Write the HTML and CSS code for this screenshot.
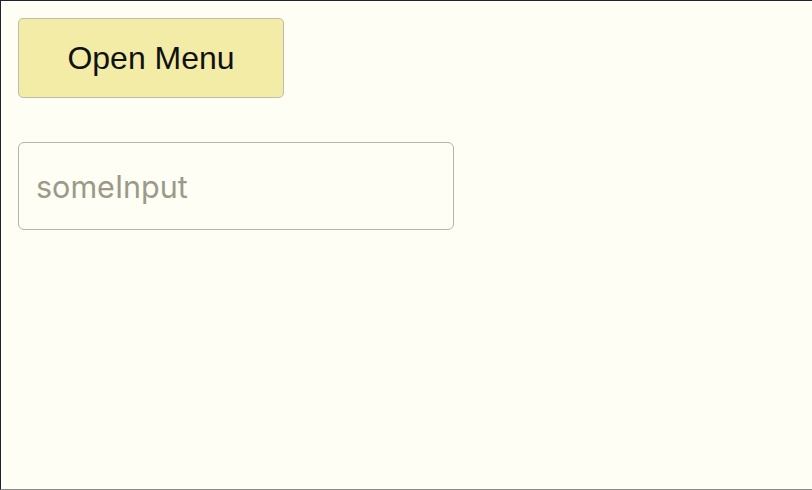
FILE: index.html
```html
<!DOCTYPE html>
<html lang="en">
<head>
<meta charset="utf-8">
<title>Menu</title>
<link rel="stylesheet" href="styles.css">
</head>
<body>
<div class="frame">
  <button class="menu-btn" type="button">Open Menu</button>
  <input class="some-input" type="text" placeholder="someInput">
</div>
</body>
</html>
```

FILE: styles.css
```css
html, body {
  margin: 0;
  padding: 0;
  height: 100%;
}
body {
  background: #fefef5;
  font-family: "Liberation Sans", Arial, sans-serif;
}
.frame {
  box-sizing: border-box;
  height: 490px;
  border-top: 1px solid #1c2433;
  border-left: 1px solid #1c2433;
  border-bottom: 1px solid #8a8a8a;
  padding: 17px 0 0 17px;
  display: flex;
  flex-direction: column;
  align-items: flex-start;
  gap: 44px;
}
.menu-btn {
  box-sizing: border-box;
  width: 266px;
  height: 80px;
  background: #f2eca6;
  border: 1px solid #bdbcae;
  border-radius: 5px;
  font-family: "Liberation Sans", Arial, sans-serif;
  font-size: 32px;
  color: #111;
  padding: 0;
}
.some-input {
  box-sizing: border-box;
  width: 436px;
  height: 88px;
  background: transparent;
  border: 1px solid #b5b4a8;
  border-radius: 6px;
  padding: 0 17px;
  font-family: Inter, "Liberation Sans", sans-serif;
  font-size: 30.5px;
  outline: none;
}
.some-input::placeholder {
  color: #9b9a88;
}
```
